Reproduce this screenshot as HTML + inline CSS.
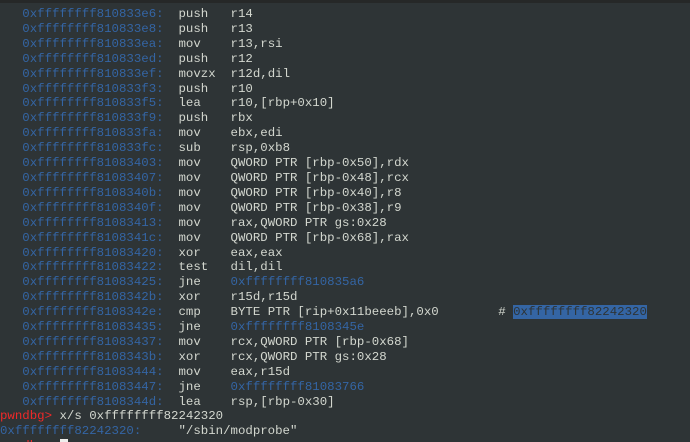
<!DOCTYPE html>
<html><head><style>
html,body{margin:0;padding:0;background:#2e3436;width:690px;height:442px;overflow:hidden;position:relative}
.top{height:3px;background:#262828}
pre{margin:0;position:absolute;top:7px;left:0;height:435px;overflow:hidden;font-family:"Liberation Mono",monospace;font-size:12.4px;line-height:14.9px;color:#d3d7cf;white-space:pre}
.b{color:#3465a4}
.r{color:#ef2929}
.h{background:#3465a4;color:#2e3436}
.c{display:inline-block;width:8px;height:12px;background:#eeeeec;vertical-align:-2px}
</style></head><body>
<div class="top"></div>
<pre><span class="b">   0xffffffff810833e6:</span>  push   r14
<span class="b">   0xffffffff810833e8:</span>  push   r13
<span class="b">   0xffffffff810833ea:</span>  mov    r13,rsi
<span class="b">   0xffffffff810833ed:</span>  push   r12
<span class="b">   0xffffffff810833ef:</span>  movzx  r12d,dil
<span class="b">   0xffffffff810833f3:</span>  push   r10
<span class="b">   0xffffffff810833f5:</span>  lea    r10,[rbp+0x10]
<span class="b">   0xffffffff810833f9:</span>  push   rbx
<span class="b">   0xffffffff810833fa:</span>  mov    ebx,edi
<span class="b">   0xffffffff810833fc:</span>  sub    rsp,0xb8
<span class="b">   0xffffffff81083403:</span>  mov    QWORD PTR [rbp-0x50],rdx
<span class="b">   0xffffffff81083407:</span>  mov    QWORD PTR [rbp-0x48],rcx
<span class="b">   0xffffffff8108340b:</span>  mov    QWORD PTR [rbp-0x40],r8
<span class="b">   0xffffffff8108340f:</span>  mov    QWORD PTR [rbp-0x38],r9
<span class="b">   0xffffffff81083413:</span>  mov    rax,QWORD PTR gs:0x28
<span class="b">   0xffffffff8108341c:</span>  mov    QWORD PTR [rbp-0x68],rax
<span class="b">   0xffffffff81083420:</span>  xor    eax,eax
<span class="b">   0xffffffff81083422:</span>  test   dil,dil
<span class="b">   0xffffffff81083425:</span>  jne    <span class="b">0xffffffff810835a6</span>
<span class="b">   0xffffffff8108342b:</span>  xor    r15d,r15d
<span class="b">   0xffffffff8108342e:</span>  cmp    BYTE PTR [rip+0x11beeeb],0x0        # <span class="h">0xffffffff82242320</span>
<span class="b">   0xffffffff81083435:</span>  jne    <span class="b">0xffffffff8108345e</span>
<span class="b">   0xffffffff81083437:</span>  mov    rcx,QWORD PTR [rbp-0x68]
<span class="b">   0xffffffff8108343b:</span>  xor    rcx,QWORD PTR gs:0x28
<span class="b">   0xffffffff81083444:</span>  mov    eax,r15d
<span class="b">   0xffffffff81083447:</span>  jne    <span class="b">0xffffffff81083766</span>
<span class="b">   0xffffffff8108344d:</span>  lea    rsp,[rbp-0x30]
<span class="r">pwndbg&gt;</span> x/s 0xffffffff82242320
<span class="b">0xffffffff82242320:</span>     "/sbin/modprobe"
<span class="r">pwndbg&gt;</span> <span class="c"></span></pre>
</body></html>
